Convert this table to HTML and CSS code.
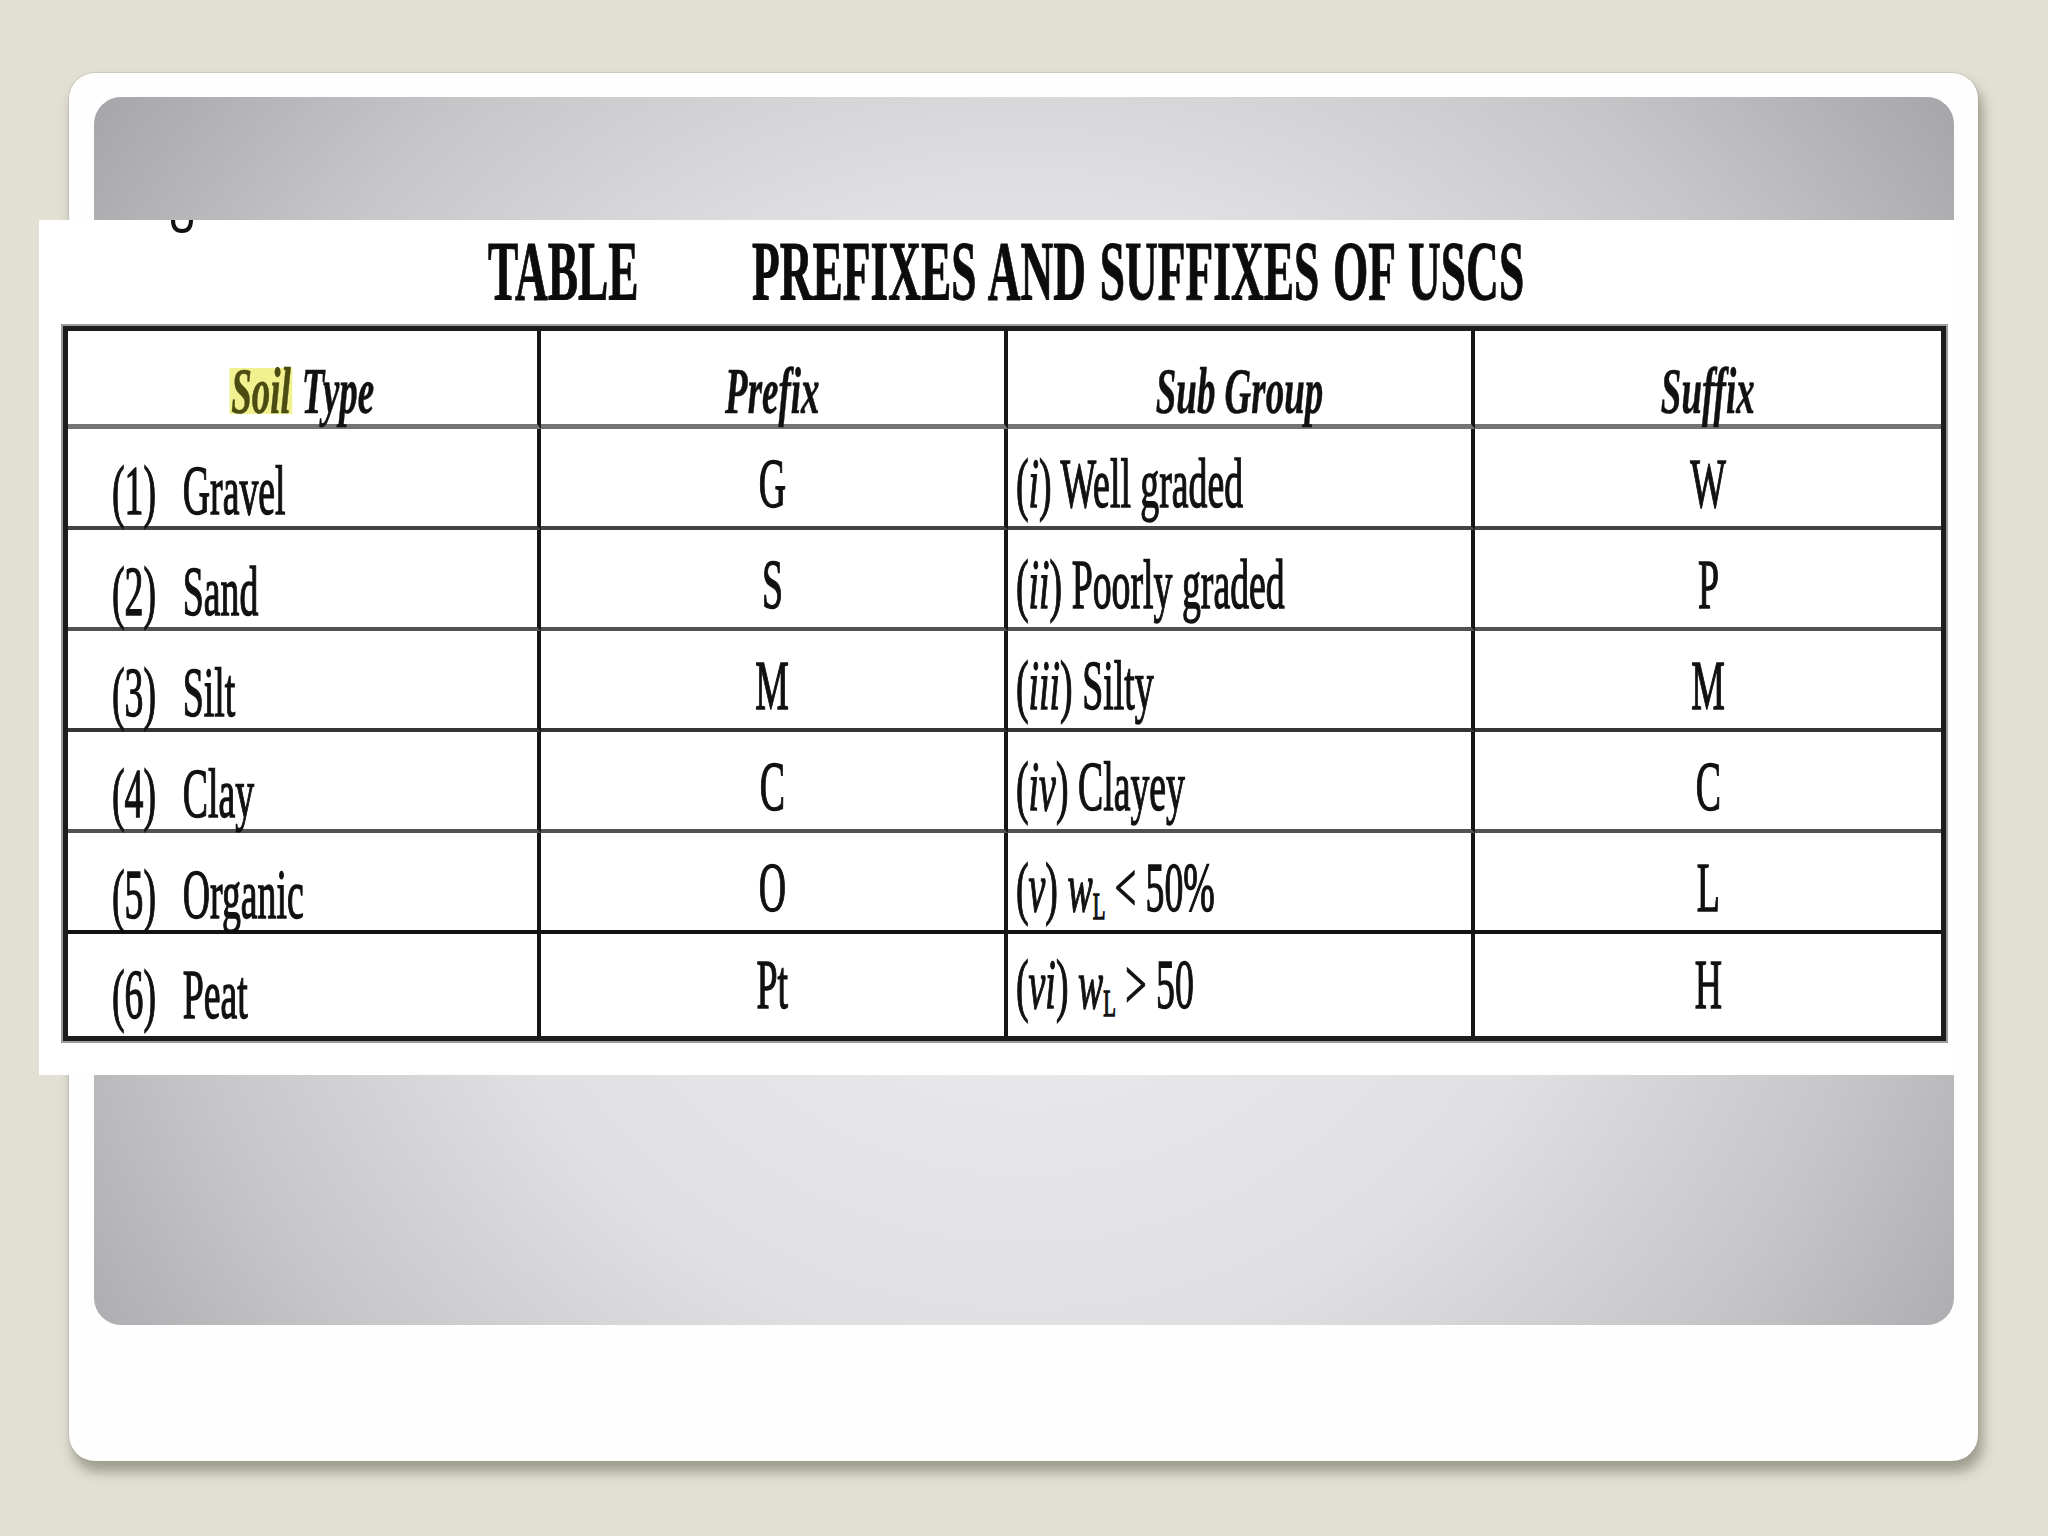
FILE: index.html
```html
<!DOCTYPE html>
<html>
<head>
<meta charset="utf-8">
<title>Prefixes and Suffixes of USCS</title>
<link rel="stylesheet" href="styles.css">
</head>
<body>
<div class="stage">
  <div class="card">
    <div class="panel"></div>
  </div>
  <div class="picture">
    <svg class="frag" width="24" height="14" viewBox="0 0 24 14"><path d="M3 0 Q3 11 12 11 Q21 11 21 0" fill="none" stroke="#111" stroke-width="4"/></svg>
    <div class="title">
      <div class="t-a"><span class="tq">TABLE</span></div>
      <div class="t-b"><span class="tq">PREFIXES AND SUFFIXES OF USCS</span></div>
    </div>
    <div class="tbl">
      <div class="cell head lh-h"><span class="sq sq-c"><span class="hl">Soil</span> Type</span></div>
      <div class="cell head lh-h"><span class="sq sq-c">Prefix</span></div>
      <div class="cell head lh-h"><span class="sq sq-c">Sub Group</span></div>
      <div class="cell head lh-h last-col"><span class="sq sq-c">Suffix</span></div>

      <div class="cell soil lh-1"><span class="sq sq-l"><span class="num">(1)</span>Gravel</span></div>
      <div class="cell mid lh-1"><span class="sq sq-c">G</span></div>
      <div class="cell sub lh-1"><span class="sq sq-l">(<i>i</i>) Well graded</span></div>
      <div class="cell mid lh-1 last-col"><span class="sq sq-c">W</span></div>

      <div class="cell soil lh-2"><span class="sq sq-l"><span class="num">(2)</span>Sand</span></div>
      <div class="cell mid lh-2"><span class="sq sq-c">S</span></div>
      <div class="cell sub lh-2"><span class="sq sq-l">(<i>ii</i>) Poorly graded</span></div>
      <div class="cell mid lh-2 last-col"><span class="sq sq-c">P</span></div>

      <div class="cell soil lh-3"><span class="sq sq-l"><span class="num">(3)</span>Silt</span></div>
      <div class="cell mid lh-3"><span class="sq sq-c">M</span></div>
      <div class="cell sub lh-3"><span class="sq sq-l">(<i>iii</i>) Silty</span></div>
      <div class="cell mid lh-3 last-col"><span class="sq sq-c">M</span></div>

      <div class="cell soil lh-4"><span class="sq sq-l"><span class="num">(4)</span>Clay</span></div>
      <div class="cell mid lh-4"><span class="sq sq-c">C</span></div>
      <div class="cell sub lh-4"><span class="sq sq-l">(<i>iv</i>) Clayey</span></div>
      <div class="cell mid lh-4 last-col"><span class="sq sq-c">C</span></div>

      <div class="cell soil lh-5"><span class="sq sq-l"><span class="num">(5)</span>Organic</span></div>
      <div class="cell mid lh-5"><span class="sq sq-c">O</span></div>
      <div class="cell sub lh-5"><span class="sq sq-l">(<i>v</i>) <i>w</i><span class="sb">L</span> &lt; 50%</span></div>
      <div class="cell mid lh-5 last-col"><span class="sq sq-c">L</span></div>

      <div class="cell soil last-row"><span class="sq sq-l"><span class="num">(6)</span>Peat</span></div>
      <div class="cell mid last-row"><span class="sq sq-c">Pt</span></div>
      <div class="cell sub last-row"><span class="sq sq-l">(<i>vi</i>) <i>w</i><span class="sb">L</span> &gt; 50</span></div>
      <div class="cell mid last-row last-col"><span class="sq sq-c">H</span></div>
    </div>
  </div>
</div>
</body>
</html>
```

FILE: styles.css
```css
html, body {
  margin: 0;
  padding: 0;
}

body {
  background: #e2dfd3;
  width: 2048px;
  height: 1536px;
  overflow: hidden;
  font-family: "Liberation Serif", "Times New Roman", serif;
  color: #111;
}

.stage {
  position: relative;
  width: 2048px;
  height: 1536px;
  padding: 73px 0 0 69px;
  box-sizing: border-box;
}

.card {
  width: 1909px;
  height: 1388px;
  box-sizing: border-box;
  padding: 24px 24px 0 25px;
  background: #fefefe;
  border-radius: 26px;
  box-shadow: 0 0 0 1px rgba(150, 150, 140, 0.25), 4px 10px 12px 1px rgba(105, 105, 88, 0.55);
}

.panel {
  width: 1860px;
  height: 1228px;
  border-radius: 27px;
  background: radial-gradient(circle farthest-corner at 50% 55%, #efeff1 0%, #e0e0e2 50%, #c6c6c9 76%, #a6a6aa 100%);
}

.picture {
  position: absolute;
  left: 39px;
  top: 220px;
  width: 1915px;
  height: 855px;
  background: #fff;
  box-sizing: border-box;
  padding-top: 44px;
}

.frag {
  position: absolute;
  left: 131px;
  top: 0;
}

/* title: glyphs drawn at 54% width by shrinking the font and stretching vertically */
.title {
  display: flex;
  height: 62px;
  padding-left: 449px;
  font-size: 45.4px;
  font-weight: bold;
  line-height: 45.4px;
  color: #0c0c0c;
  -webkit-text-stroke: 0.55px #0c0c0c;
}

.t-a {
  width: 264px;
  flex: none;
}

.t-b {
  flex: none;
  word-spacing: 2.4px;
}

.tq {
  display: inline-block;
  white-space: nowrap;
  transform: scaleY(1.852);
  transform-origin: 0 38px;
}

.sq {
  display: inline-block;
  white-space: nowrap;
  transform: scaleX(0.54);
}

.sq-l {
  transform-origin: left bottom;
}

.sq-c {
  transform-origin: center bottom;
}

.tbl {
  margin-left: 24px;
  width: 1883px;
  height: 715px;
  box-sizing: border-box;
  border: 5px solid #1c1c1c;
  box-shadow: 0 0 0 2px #9c9c9c;
  display: grid;
  grid-template-columns: 473px 467px 467px 466px;
  grid-template-rows: 98px 101px 101px 101px 101px 101px 102px;
}

.cell {
  box-sizing: border-box;
  border-right: 4px solid #161616;
  border-bottom: 4px solid #454545;
  display: flex;
  align-items: flex-end;
  font-size: 70px;
  line-height: 70px;
  min-width: 0;
  -webkit-text-stroke: 1.4px #111;
}

.last-col {
  border-right: none;
}

.last-row {
  border-bottom: none;
  padding-bottom: 8px;
}

.lh-h { border-bottom: 5px solid #747474; }
.lh-1 { border-bottom-color: #444444; }
.lh-2 { border-bottom-color: #505050; }
.lh-3 { border-bottom-color: #343434; }
.lh-4 { border-bottom-color: #525252; }
.lh-5 { border-bottom-color: #121212; }

.head {
  justify-content: center;
  font-size: 66px;
  line-height: 66px;
  font-weight: bold;
  font-style: italic;
  padding-bottom: 0;
  -webkit-text-stroke: 0.6px #111;
}

.head .sq {
  transform: scaleX(0.56);
}

.hl {
  display: inline-block;
  height: 46px;
  line-height: 46px;
  background: #f1f190;
  color: #4b4b12;
  -webkit-text-stroke: 0.6px #4b4b12;
  padding: 0 3px;
  margin-left: -3px;
}

.soil {
  padding-left: 44px;
  padding-bottom: 0;
}

.soil.last-row {
  padding-bottom: 6px;
}

.num {
  display: inline-block;
  width: 131px;
}

.mid {
  justify-content: center;
  padding-bottom: 7px;
}

.mid.last-row {
  padding-bottom: 16px;
}

.sub {
  padding-left: 8px;
  padding-bottom: 7px;
}

.sub.last-row {
  padding-bottom: 16px;
}

.sub i {
  font-style: italic;
}

.sb {
  font-size: 0.55em;
  line-height: 0;
  vertical-align: -0.2em;
}
```
